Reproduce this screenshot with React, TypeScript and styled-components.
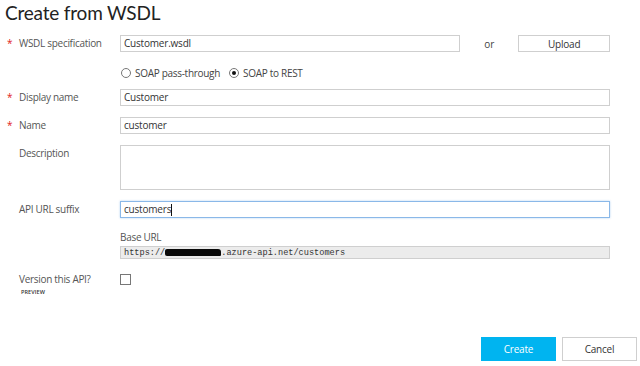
import styled, { createGlobalStyle } from "styled-components";

const GlobalStyle = createGlobalStyle`
  html, body {
    margin: 0;
    padding: 0;
    background: #ffffff;
  }
  body {
    font-family: "Open Sans", "Noto Sans", sans-serif;
    color: #333333;
  }
`;

const Page = styled.div`
  width: 640px;
  height: 366px;
  box-sizing: border-box;
  padding: 0 3px 0 0;
  display: flex;
  flex-direction: column;
`;

const Title = styled.h1`
  margin: 0;
  padding: 0 0 0 5px;
  height: 30px;
  line-height: 25px;
  font-family: Lato, "Open Sans", sans-serif;
  font-size: 19px;
  letter-spacing: -0.2px;
  font-weight: 400;
  color: #222222;
`;

const Row = styled.div<{ $mt: number }>`
  display: grid;
  grid-template-columns: 120px 490px;
  margin-top: ${(p) => p.$mt}px;
`;

const Label = styled.div`
  display: flex;
  align-items: flex-start;
  height: 17px;
  line-height: 17px;
  font-size: 10px;
  letter-spacing: -0.3px;
  color: #555555;
`;

const Star = styled.span`
  width: 12px;
  padding-left: 7px;
  color: #e02020;
  font-size: 10px;
`;

const Spacer = styled.span`
  width: 19px;
`;

const TextBox = styled.div<{ $h?: number; $focused?: boolean }>`
  box-sizing: border-box;
  height: ${(p) => p.$h ?? 17}px;
  border: 1px solid ${(p) => (p.$focused ? "#8ab8e8" : "#cfcfcf")};
  box-shadow: ${(p) => (p.$focused ? "0 0 2px rgba(90,160,230,0.45)" : "none")};
  padding: 0 3px;
  line-height: 15px;
  font-size: 10px;
  letter-spacing: -0.2px;
  color: #333333;
  display: flex;
  align-items: flex-start;
`;

const Caret = styled.span`
  display: inline-block;
  width: 1px;
  height: 12px;
  margin-top: 2px;
  background: #111111;
`;

const SpecLine = styled.div`
  display: flex;
  align-items: center;
`;

const Or = styled.span`
  width: 58px;
  text-align: center;
  font-size: 10px;
  color: #444444;
`;

const GhostButton = styled.button<{ $w: number; $h: number }>`
  box-sizing: border-box;
  width: ${(p) => p.$w}px;
  height: ${(p) => p.$h}px;
  background: #ffffff;
  border: 1px solid #cfcfcf;
  font-family: inherit;
  font-size: 10px;
  letter-spacing: -0.2px;
  color: #333333;
  padding: 0;
  cursor: pointer;
`;

const PrimaryButton = styled(GhostButton)`
  background: #00b4f0;
  border-color: #00b4f0;
  color: #ffffff;
`;

const Radios = styled.div`
  display: flex;
  align-items: center;
  gap: 9px;
  height: 15px;
  padding-left: 1px;
  font-size: 10px;
  letter-spacing: -0.3px;
  color: #444444;
`;

const RadioItem = styled.label`
  display: flex;
  align-items: center;
  gap: 4px;
`;

const RadioCircle = styled.span<{ $on?: boolean }>`
  box-sizing: border-box;
  width: 10px;
  height: 10px;
  border-radius: 50%;
  border: 1px solid #777777;
  display: flex;
  align-items: center;
  justify-content: center;
  &::after {
    content: "";
    width: 4px;
    height: 4px;
    border-radius: 50%;
    background: ${(p) => (p.$on ? "#111111" : "transparent")};
  }
`;

const SubLabel = styled.div`
  font-size: 10px;
  line-height: 12px;
  letter-spacing: -0.3px;
  color: #555555;
  margin-bottom: 3px;
`;

const UrlBox = styled.div`
  box-sizing: border-box;
  height: 13px;
  background: #ececec;
  border: 1px solid #cfcfcf;
  padding: 0 3px;
  display: flex;
  align-items: center;
  font-family: "Liberation Mono", "DejaVu Sans Mono", monospace;
  font-size: 8.6px;
  color: #333333;
  white-space: pre;
`;

const Redacted = styled.span`
  display: inline-block;
  width: 56px;
  height: 7px;
  background: #0a0a0a;
  border-radius: 2px 3px 1px 2px;
`;

const VersionLabel = styled.div`
  padding-left: 19px;
  display: flex;
  flex-direction: column;
  font-size: 10px;
  line-height: 12px;
  letter-spacing: -0.3px;
  color: #555555;
`;

const Preview = styled.span`
  margin-top: 1px;
  padding-left: 2px;
  font-size: 5.5px;
  font-weight: 600;
  letter-spacing: 0.1px;
  color: #333333;
`;

const CheckBox = styled.span`
  box-sizing: border-box;
  display: block;
  width: 11px;
  height: 11px;
  margin-top: 1px;
  border: 1px solid #777777;
  background: #ffffff;
`;

const Footer = styled.div`
  margin-top: auto;
  margin-bottom: 5px;
  display: flex;
  justify-content: flex-end;
  gap: 6px;
`;

type FieldProps = {
  label: string;
  required?: boolean;
  mt: number;
  children: React.ReactNode;
};

const Field = ({ label, required, mt, children }: FieldProps) => (
  <Row $mt={mt}>
    <Label>
      {required ? <Star>*</Star> : <Spacer />}
      {label}
    </Label>
    <div>{children}</div>
  </Row>
);

export default function App() {
  return (
    <Page>
      <GlobalStyle />
      <Title>Create from WSDL</Title>

      <Field label="WSDL specification" required mt={5}>
        <SpecLine>
          <TextBox style={{ width: 341 }}>Customer.wsdl</TextBox>
          <Or>or</Or>
          <GhostButton $w={92} $h={17}>
            Upload
          </GhostButton>
        </SpecLine>
      </Field>

      <Row $mt={13}>
        <div />
        <Radios>
          <RadioItem>
            <RadioCircle />
            SOAP pass-through
          </RadioItem>
          <RadioItem>
            <RadioCircle $on />
            SOAP to REST
          </RadioItem>
        </Radios>
      </Row>

      <Field label="Display name" required mt={9}>
        <TextBox>Customer</TextBox>
      </Field>

      <Field label="Name" required mt={11}>
        <TextBox>customer</TextBox>
      </Field>

      <Field label="Description" mt={11}>
        <TextBox $h={45} />
      </Field>

      <Field label="API URL suffix" mt={11}>
        <TextBox $focused>
          customers
          <Caret />
        </TextBox>
      </Field>

      <Row $mt={13}>
        <div />
        <div>
          <SubLabel>Base URL</SubLabel>
          <UrlBox>
            https://<Redacted />.azure-api.net/customers
          </UrlBox>
        </div>
      </Row>

      <Row $mt={14}>
        <VersionLabel>
          Version this API?
          <Preview>PREVIEW</Preview>
        </VersionLabel>
        <div>
          <CheckBox />
        </div>
      </Row>

      <Footer>
        <PrimaryButton $w={75} $h={24}>
          Create
        </PrimaryButton>
        <GhostButton $w={75} $h={24}>
          Cancel
        </GhostButton>
      </Footer>
    </Page>
  );
}
